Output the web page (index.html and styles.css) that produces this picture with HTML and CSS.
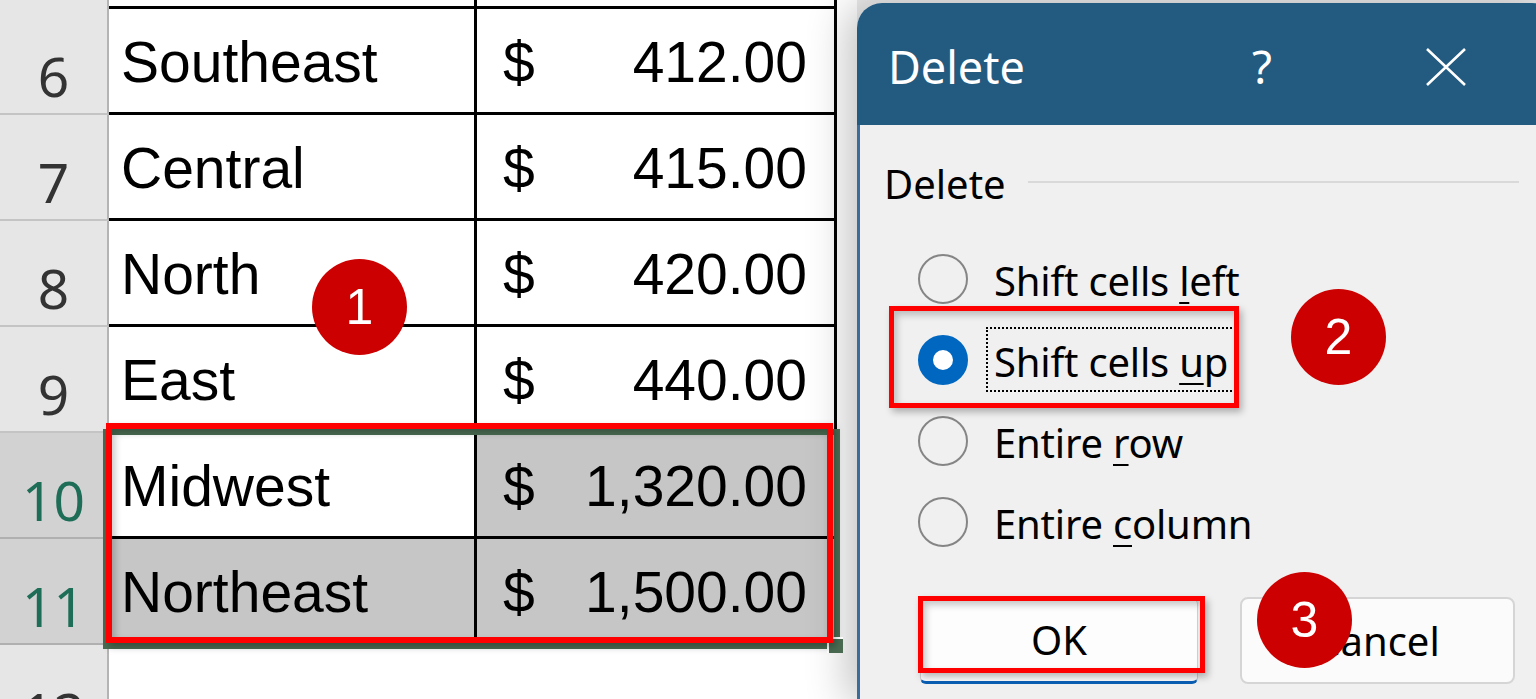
FILE: index.html
```html
<!DOCTYPE html>
<html lang="en">
<head>
<meta charset="utf-8">
<title>Delete cells</title>
<link rel="stylesheet" href="styles.css">
</head>
<body>
<div class="screen">
  <div class="sheet">
    <div class="row partial"><div class="rh"></div><div class="c a"></div><div class="c b"></div><div class="c x"></div></div>
    <div class="row"><div class="rh">6</div><div class="c a">Southeast</div><div class="c b"><span>$</span><span>412.00</span></div><div class="c x"></div></div>
    <div class="row"><div class="rh">7</div><div class="c a">Central</div><div class="c b"><span>$</span><span>415.00</span></div><div class="c x"></div></div>
    <div class="row"><div class="rh">8</div><div class="c a">North</div><div class="c b"><span>$</span><span>420.00</span></div><div class="c x"></div></div>
    <div class="row"><div class="rh">9</div><div class="c a">East</div><div class="c b"><span>$</span><span>440.00</span></div><div class="c x"></div></div>
    <div class="row sel"><div class="rh">10</div><div class="c a active">Midwest</div><div class="c b"><span>$</span><span>1,320.00</span></div><div class="c x"></div></div>
    <div class="row sel"><div class="rh">11</div><div class="c a">Northeast</div><div class="c b"><span>$</span><span>1,500.00</span></div><div class="c x"></div></div>
    <div class="row blank"><div class="rh">12</div><div class="c a"></div><div class="c b"></div><div class="c x"></div></div>
  </div>

  <div class="dialog">
    <div class="titlebar">
      <span class="title">Delete</span>
      <span class="help">?</span>
      <span class="close"><svg width="40" height="38" viewBox="0 0 40 38"><path d="M1 1 L39 37 M39 1 L1 37" stroke="#ffffff" stroke-width="2.6" fill="none"/></svg></span>
    </div>
    <div class="dbody">
      <div class="group-head"><span>Delete</span><span class="rule"></span></div>
      <div class="options">
        <div class="opt"><span class="radio"></span><span class="lbl">Shift cells <u>l</u>eft</span></div>
        <div class="opt"><span class="radio on"></span><span class="lbl focus">Shift cells <u>u</u>p</span></div>
        <div class="opt"><span class="radio"></span><span class="lbl">Entire <u>r</u>ow</span></div>
        <div class="opt"><span class="radio"></span><span class="lbl">Entire <u>c</u>olumn</span></div>
      </div>
      <div class="buttons">
        <div class="btn ok">OK</div>
        <div class="btn cancel">Cancel</div>
      </div>
    </div>
  </div>

  <div class="sel-border"></div>
  <div class="fill-handle"></div>
  <div class="mark m1"></div>
  <div class="mark m2"></div>
  <div class="mark m3"></div>
  <div class="badge b1">1</div>
  <div class="badge b2">2</div>
  <div class="badge b3">3</div>
</div>
</body>
</html>
```

FILE: styles.css
```css
* { box-sizing: border-box; }
html, body { margin: 0; padding: 0; }
body { background: #ffffff; }

.screen {
  position: relative;
  width: 1536px;
  height: 699px;
  overflow: hidden;
  display: flex;
  align-items: flex-start;
  background: #ebebeb;
}

/* ---------- spreadsheet ---------- */
.sheet {
  flex: 0 0 857px;
  display: flex;
  flex-direction: column;
  background: #ffffff;
}
.row {
  display: flex;
  height: 106px;
}
.row.partial { height: 9px; }
.rh {
  flex: 0 0 109px;
  background: #e6e6e6;
  border-right: 2px solid #b4b4b4;
  border-bottom: 2px solid #c4c4c4;
  display: flex;
  align-items: flex-end;
  justify-content: center;
  padding-bottom: 10px;
  font-family: "Noto Sans", "Open Sans", sans-serif;
  font-size: 55px;
  line-height: 1;
  color: #333333;
}
.c {
  border-bottom: 3px solid #000000;
  display: flex;
  align-items: center;
  padding-top: 3px;
  font-family: "Liberation Sans", Arial, sans-serif;
  font-size: 57px;
  line-height: 1;
  color: #000000;
  background: #ffffff;
}
.c.a {
  flex: 0 0 368px;
  border-right: 3px solid #000000;
  padding-left: 12px;
}
.c.b {
  flex: 0 0 360px;
  border-right: 3px solid #000000;
  justify-content: space-between;
  padding-left: 26px;
  padding-right: 27px;
}
.c.x {
  flex: 1 1 auto;
  border-bottom: none;
}
.row.sel .rh {
  background: #d2d2d2;
  color: #1e6e57;
  border-bottom-color: #b0b0b0;
}
.row.sel .c.a, .row.sel .c.b { background: #c6c6c6; }
.row.sel .c.a.active { background: #ffffff; }
.row.blank .c.a, .row.blank .c.b { border: none; }

/* ---------- dialog ---------- */
.dialog {
  flex: 0 0 700px;
  margin-top: 3px;
  height: 700px;
  border-radius: 25px 25px 0 0;
  overflow: hidden;
  background: #f0f0f0;
  box-shadow: -10px 0 42px rgba(0, 0, 0, 0.24);
  font-family: "Noto Sans", "Open Sans", sans-serif;
  color: #000000;
}
.titlebar {
  height: 122px;
  background: #235a80;
  display: flex;
  align-items: center;
  color: #ffffff;
}
.title {
  flex: 0 0 360px;
  padding-left: 31px;
  font-size: 45px;
  line-height: 1;
  padding-top: 4px;
}
.help {
  flex: 0 0 90px;
  text-align: center;
  font-size: 46px;
  line-height: 1;
  padding-top: 4px;
}
.close {
  flex: 0 0 90px;
  margin-left: 94px;
  display: flex;
  justify-content: center;
  padding-top: 6px;
}
.close svg { display: block; }

.dbody {
  border-left: 3px solid #3a6c9c;
  height: 578px;
  padding: 35px 38px 0 24px;
}
.group-head {
  display: flex;
  align-items: center;
  gap: 22px;
  font-size: 40px;
  line-height: 48px;
}
.rule {
  flex: 1 1 auto;
  height: 2px;
  margin-top: -4px;
  background: #d9d9d9;
}
.options {
  margin-top: 30px;
  padding-left: 34px;
  display: flex;
  flex-direction: column;
}
.opt {
  height: 81px;
  display: flex;
  align-items: center;
  gap: 18px;
}
.radio {
  flex: 0 0 50px;
  width: 50px;
  height: 50px;
  border-radius: 50%;
  border: 2px solid #858585;
}
.radio.on {
  border: 15px solid #0067c0;
  background: #ffffff;
}
.lbl {
  font-size: 40px;
  line-height: 48px;
  letter-spacing: -0.2px;
  padding: 9px 6px 4px 6px;
  border: 2px dotted transparent;
}
.lbl.focus { border-color: #000000; }
.lbl u {
  text-decoration-thickness: 2px;
  text-underline-offset: 6px;
}
.buttons {
  margin-top: 35px;
  padding-left: 36px;
  display: flex;
  gap: 42px;
  align-items: flex-start;
}
.btn {
  display: flex;
  align-items: center;
  justify-content: center;
  font-size: 40px;
  line-height: 1;
  color: #000000;
}
.btn.ok {
  width: 278px;
  height: 86px;
  margin-top: 1px;
  background: #fdfdfd;
  border: 1px solid #d0d0d0;
  border-bottom: 3px solid #0a5fb4;
  border-radius: 6px;
}
.btn.cancel {
  width: 275px;
  height: 87px;
  background: #fbfbfb;
  border: 2px solid #d5d5d5;
  border-radius: 8px;
}

/* ---------- overlays ---------- */
.sel-border {
  position: absolute;
  left: 103px;
  top: 429px;
  width: 737px;
  height: 220px;
  border: 6px solid #4a6b52;
}
.fill-handle {
  position: absolute;
  left: 827px;
  top: 637px;
  width: 16px;
  height: 16px;
  background: #4a6b52;
  border-top: 2px solid #ffffff;
  border-left: 2px solid #ffffff;
}
.mark {
  position: absolute;
  border: 6px solid #ff0000;
  box-shadow: 3px 4px 7px rgba(0, 0, 0, 0.28), inset 3px 4px 7px rgba(0, 0, 0, 0.22);
}
.m1 { left: 106px; top: 423px; width: 727px; height: 220px; }
.m2 { left: 889px; top: 306px; width: 350px; height: 102px; border-width: 5px; }
.m3 { left: 918px; top: 596px; width: 287px; height: 77px; border-width: 5px; }

.badge {
  position: absolute;
  width: 95px;
  height: 96px;
  border-radius: 50%;
  background: #cc0000;
  color: #ffffff;
  display: flex;
  align-items: center;
  justify-content: center;
  font-family: "Liberation Sans", Arial, sans-serif;
  font-size: 50px;
  line-height: 1;
}
.b1 { left: 312px; top: 259px; }
.b2 { left: 1291px; top: 289px; }
.b3 { left: 1257px; top: 572px; }
```
